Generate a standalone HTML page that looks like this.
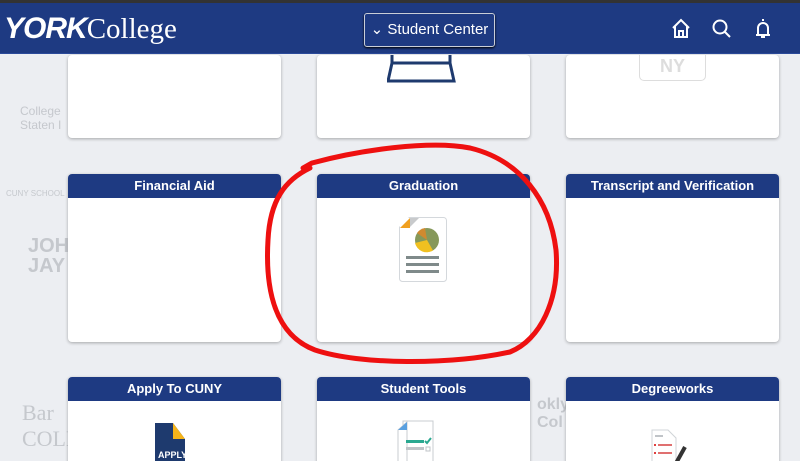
<!DOCTYPE html>
<html><head><style>
*{margin:0;padding:0;box-sizing:border-box}
html,body{width:800px;height:461px;overflow:hidden}
body{background:#eceef2;font-family:"Liberation Sans",sans-serif;position:relative}
.top{position:absolute;left:0;top:0;width:800px;height:3px;background:#333}
.hdr{position:absolute;left:0;top:3px;width:800px;height:51px;background:#1e3a82;border-bottom:1px solid #2b4a9a}
.logo{position:absolute;left:4px;top:9px;color:#fff;font-size:30px;line-height:34px}
.logo b{font-family:"Liberation Sans",sans-serif;font-weight:900;letter-spacing:-1px;font-style:italic}
.logo span{font-family:"Liberation Serif",serif;font-size:29px}
.sc{position:absolute;left:364px;top:10px;width:131px;height:34px;border:1px solid #c9ced8;border-radius:3px;background:#1e3a82;color:#fff;font-size:15px;line-height:32px;text-align:center;box-shadow:0 1px 2px #000}
.tile{position:absolute;width:213px;background:#fff;border-radius:4px;box-shadow:0 1px 3px rgba(0,0,0,.3);overflow:hidden}
.th{background:#1e3a82;color:#fff;font-weight:bold;font-size:13px;text-align:center;height:24px;line-height:24px}
.bg{position:absolute;color:#c5c8cd;font-size:12px}
</style></head><body>
<div class="top"></div>
<div class="hdr">
<div class="logo"><b>YORK</b><span>College</span></div>
<div class="sc">⌄ Student Center</div>
<svg style="position:absolute;left:670px;top:14px" width="110" height="24" viewBox="0 0 110 24" fill="none" stroke="#fff" stroke-width="2">
<path d="M3 11 L11 3 L19 11 M5 9 V20 H17 V9 M9 20 V14 H13 V20"/>
<circle cx="50" cy="10" r="6.5"/><path d="M55 15 L60 20"/>
<path d="M93 4 V2 M88 18 V11 a5 5 0 0 1 10 0 V18 H86 H100 M91 20 h4"/>
</svg>
</div>
<div class="bg" style="left:20px;top:104px">College<br>Staten I</div>
<div class="bg" style="left:6px;top:189px;font-size:8px">CUNY SCHOOL</div>
<div class="bg" style="left:28px;top:236px;font-size:20px;font-weight:bold;line-height:20px">JOH<br>JAY</div>
<div class="bg" style="left:22px;top:400px;font-size:22px;font-family:'Liberation Serif'">Bar<br>COLL</div>
<div class="bg" style="left:537px;top:396px;font-size:16px;font-weight:bold">oklyn<br>Col</div>
<div class="tile" style="left:68px;top:55px;height:83px"></div>
<div class="tile" style="left:317px;top:55px;height:83px">
<svg style="position:absolute;left:70px;top:0" width="70" height="30"><path d="M5 0 V8 M63 0 V8 M5 8 H63 M5 8 L1 26 H67 L63 8" fill="none" stroke="#1e3a6e" stroke-width="3"/></svg></div>
<div class="tile" style="left:566px;top:55px;height:83px">
<div style="position:absolute;left:73px;top:0;width:67px;height:26px;border:1px solid #ddd;border-top:none;border-radius:0 0 5px 5px;color:#ddd;font-weight:bold;font-size:18px;text-align:center;line-height:22px">NY</div></div>
<div class="tile" style="left:68px;top:174px;height:168px"><div class="th">Financial Aid</div></div>
<div class="tile" style="left:317px;top:174px;height:168px"><div class="th">Graduation</div>
<svg style="position:absolute;left:82px;top:43px" width="50" height="68">
<rect x="0.5" y="0.5" width="47" height="64" rx="3" fill="#fff" stroke="#d4d8dc"/>
<path d="M0 10 L10 0 H0Z" fill="#fff"/><path d="M1 11 L11 1 V11Z" fill="#f0a020"/><path d="M11 1 H20 L11 10Z" fill="#c8cacc"/>
<circle cx="28" cy="23" r="12" fill="#86985a"/><path d="M28 23 L16 26 A12 12 0 0 0 34 33.5Z" fill="#f0c020"/><path d="M28 23 L18 16 A12 12 0 0 1 26 11Z" fill="#d08a30"/>
<rect x="7" y="39" width="33" height="3" fill="#7f8a8a"/><rect x="7" y="46" width="33" height="3" fill="#7f8a8a"/><rect x="7" y="53" width="33" height="3" fill="#7f8a8a"/>
</svg></div>
<div class="tile" style="left:566px;top:174px;height:168px"><div class="th">Transcript and Verification</div></div>
<div class="tile" style="left:68px;top:377px;height:100px"><div class="th">Apply To CUNY</div>
<svg style="position:absolute;left:85px;top:46px" width="34" height="60"><path d="M2 0 H20 L32 16 V60 H2Z" fill="#1e3a6e"/><path d="M20 0 L32 16 H20Z" fill="#f5b41a"/><text x="5" y="35" fill="#fff" font-size="9" font-weight="bold" font-family="Liberation Sans">APPLY</text></svg></div>
<div class="tile" style="left:317px;top:377px;height:100px"><div class="th">Student Tools</div>
<svg style="position:absolute;left:80px;top:43px" width="40" height="60"><rect x="6" y="1" width="30" height="58" fill="#fff" stroke="#c8ccd0"/><path d="M1 10 L10 2 V60 H1Z" fill="#fff" stroke="#c8ccd0"/><path d="M1 10 L10 2 V10Z" fill="#5aa0e0"/><rect x="9" y="20" width="18" height="3" fill="#2aa890"/><path d="M28 21 l2 2 4-5" stroke="#2aa890" fill="none" stroke-width="2"/><rect x="9" y="27" width="18" height="3" fill="#c0c4c8"/><rect x="29" y="27" width="4" height="4" fill="none" stroke="#c0c4c8"/></svg></div>
<div class="tile" style="left:566px;top:377px;height:100px"><div class="th">Degreeworks</div>
<svg style="position:absolute;left:85px;top:52px" width="40" height="40"><path d="M1 1 H17 L25 9 V40 H1Z" fill="#fff" stroke="#d0d4d8"/><rect x="4" y="6" width="8" height="2" fill="#c0c4c8"/><rect x="3" y="15" width="2" height="2" fill="#e04040"/><rect x="7" y="15" width="14" height="2" fill="#e07070"/><rect x="3" y="23" width="2" height="2" fill="#e04040"/><rect x="7" y="23" width="14" height="2" fill="#e07070"/><path d="M34 18 L24 36" stroke="#333" stroke-width="4"/></svg></div>
<svg style="position:absolute;left:0;top:0" width="800" height="461"><path d="M303 168 L312 163 C360 150 430 140 470 148 C520 160 550 200 556 250 C560 300 540 340 510 352 C450 365 360 365 315 350 C275 335 265 290 268 240 C270 200 285 180 310 168" fill="none" stroke="#ee1010" stroke-width="5" stroke-linecap="round"/></svg>
</body></html>
